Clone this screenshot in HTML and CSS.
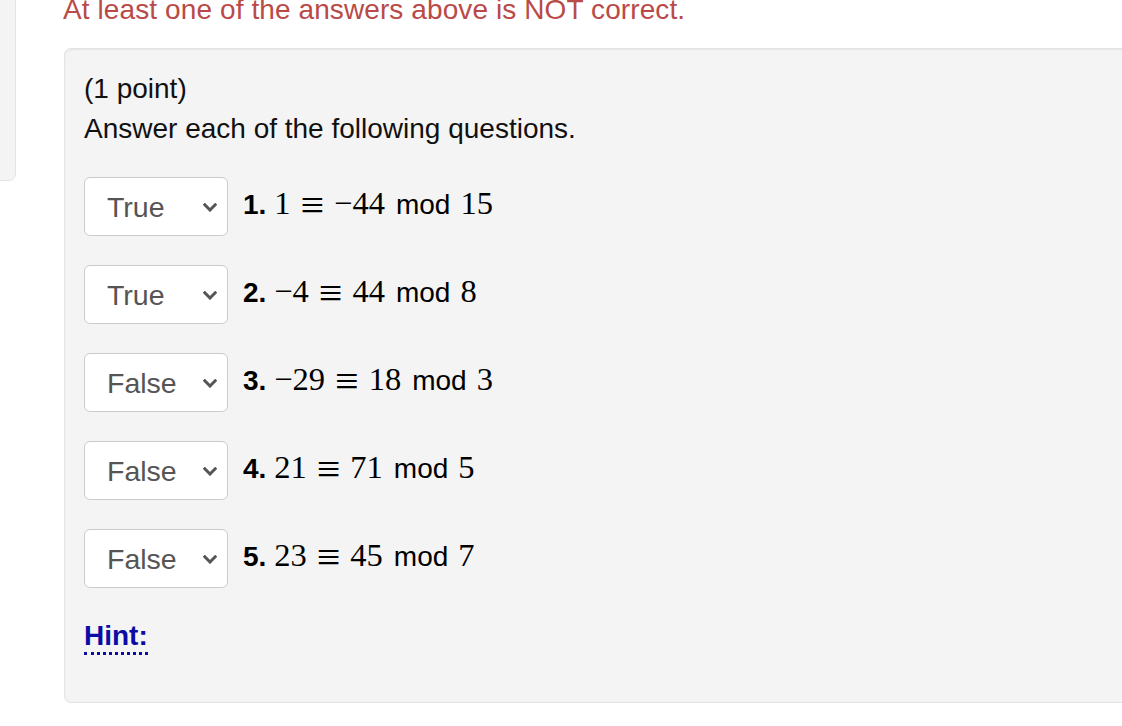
FILE: index.html
```html
<!DOCTYPE html>
<html lang="en">
<head>
    <meta charset="UTF-8">
    <meta name="viewport" content="width=device-width, initial-scale=1.0">
    <title>Problem</title>
    <link rel="stylesheet" href="styles.css">
</head>
<body>
    <div class="page">
        <div class="sidebar"></div>

        <div class="main">
            <div class="answer-msg">At least one of the answers above is NOT correct.</div>

            <div class="well problem">
                <div>(1 point)</div>
                <div>Answer each of the following questions.</div>

                <div class="questions">
                    <div class="question">
                        <div class="select-wrap">
                            <select class="tf"><option>?</option><option selected>True</option><option>False</option></select>
                            <svg class="chevron" viewBox="0 0 14 9" width="14" height="9"><path d="M1.8 1.8 L7 7 L12.2 1.8" fill="none" stroke="#555" stroke-width="3" stroke-linecap="square" stroke-linejoin="miter"/></svg>
                        </div>
                        <div class="label"><b>1.</b> <span class="math">1<span class="rel">≡</span>−44</span><span class="mod">mod</span><span class="math">15</span></div>
                    </div>
                    <div class="question">
                        <div class="select-wrap">
                            <select class="tf"><option>?</option><option selected>True</option><option>False</option></select>
                            <svg class="chevron" viewBox="0 0 14 9" width="14" height="9"><path d="M1.8 1.8 L7 7 L12.2 1.8" fill="none" stroke="#555" stroke-width="3" stroke-linecap="square" stroke-linejoin="miter"/></svg>
                        </div>
                        <div class="label"><b>2.</b> <span class="math">−4<span class="rel">≡</span>44</span><span class="mod">mod</span><span class="math">8</span></div>
                    </div>
                    <div class="question">
                        <div class="select-wrap">
                            <select class="tf"><option>?</option><option>True</option><option selected>False</option></select>
                            <svg class="chevron" viewBox="0 0 14 9" width="14" height="9"><path d="M1.8 1.8 L7 7 L12.2 1.8" fill="none" stroke="#555" stroke-width="3" stroke-linecap="square" stroke-linejoin="miter"/></svg>
                        </div>
                        <div class="label"><b>3.</b> <span class="math">−29<span class="rel">≡</span>18</span><span class="mod">mod</span><span class="math">3</span></div>
                    </div>
                    <div class="question">
                        <div class="select-wrap">
                            <select class="tf"><option>?</option><option>True</option><option selected>False</option></select>
                            <svg class="chevron" viewBox="0 0 14 9" width="14" height="9"><path d="M1.8 1.8 L7 7 L12.2 1.8" fill="none" stroke="#555" stroke-width="3" stroke-linecap="square" stroke-linejoin="miter"/></svg>
                        </div>
                        <div class="label"><b>4.</b> <span class="math">21<span class="rel">≡</span>71</span><span class="mod">mod</span><span class="math">5</span></div>
                    </div>
                    <div class="question">
                        <div class="select-wrap">
                            <select class="tf"><option>?</option><option>True</option><option selected>False</option></select>
                            <svg class="chevron" viewBox="0 0 14 9" width="14" height="9"><path d="M1.8 1.8 L7 7 L12.2 1.8" fill="none" stroke="#555" stroke-width="3" stroke-linecap="square" stroke-linejoin="miter"/></svg>
                        </div>
                        <div class="label"><b>5.</b> <span class="math">23<span class="rel">≡</span>45</span><span class="mod">mod</span><span class="math">7</span></div>
                    </div>
                </div>

                <div class="hint"><a class="hint-link">Hint:</a></div>
            </div>
        </div>
    </div>
</body>
</html>
```

FILE: styles.css
```css
:root {
    --well-bg: #f4f4f4;
    --well-border: #e3e3e3;
    --text: #111;
    --error: #b94a48;
    --hint: #0b0ba5;
}

html, body {
    margin: 0;
    padding: 0;
    overflow: hidden;
}

body {
    font-family: "Liberation Sans", Arial, Helvetica, sans-serif;
    font-size: 28px;
    line-height: 40px;
    color: var(--text);
    background: #fff;
    height: 726px;
}

.page {
    display: flex;
    align-items: flex-start;
}

.sidebar {
    flex: none;
    width: 24px;
    height: 199px;
    margin-top: -20px;
    margin-left: -10px;
    background: var(--well-bg);
    border: 1px solid var(--well-border);
    border-radius: 0 0 7px 0;
}

.main {
    flex: 1;
    margin-left: 48px;
    margin-right: -40px;
}

.answer-msg {
    color: var(--error);
    margin-top: -10px;
    margin-left: -1px;
    letter-spacing: 0.1px;
    white-space: nowrap;
}

.well {
    background: var(--well-bg);
    border: 1px solid var(--well-border);
    border-radius: 7px;
    box-shadow: inset 0 1px 2px rgba(0, 0, 0, 0.06);
}

.problem {
    margin-top: 18px;
    padding: 20px 20px 46px 19px;
}

.questions {
    display: flex;
    flex-direction: column;
    gap: 29px;
    margin-top: 28px;
}

.question {
    display: flex;
    align-items: center;
    gap: 15px;
}

.select-wrap {
    position: relative;
    flex: none;
}

.tf {
    appearance: none;
    -webkit-appearance: none;
    display: block;
    width: 144px;
    height: 59px;
    margin: 0;
    padding: 0 0 0 22px;
    font-family: "Liberation Sans", Arial, Helvetica, sans-serif;
    font-size: 28.5px;
    color: #555;
    background: #fff;
    border: 1px solid #ccc;
    border-radius: 6px;
}

.chevron {
    position: absolute;
    right: 11px;
    top: 26px;
    pointer-events: none;
}

.label {
    margin-top: -6px;
    color: #000;
    white-space: nowrap;
}

.label b {
    font-weight: bold;
}

.math {
    font-family: "Liberation Serif", "Times New Roman", serif;
    font-size: 32.5px;
}

.rel {
    display: inline-block;
    margin: 0 10px;
    font-family: "Liberation Serif", serif;
    font-size: 42px;
    line-height: 30px;
    vertical-align: -5px;
}

.mod {
    margin: 0 10px 0 11px;
}

.hint {
    margin-top: 28px;
}

.hint-link {
    color: var(--hint);
    font-weight: bold;
    text-decoration: none;
    border-bottom: 3px dotted var(--hint);
    padding-bottom: 1px;
}
```
